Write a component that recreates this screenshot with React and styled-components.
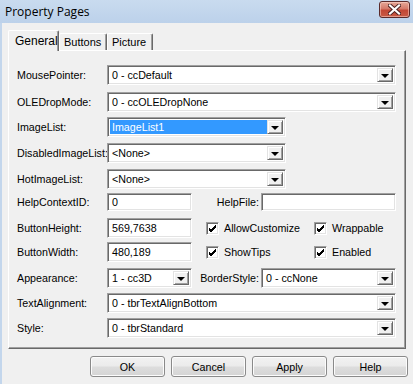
import React from "react";
import styled, { createGlobalStyle } from "styled-components";

const Global = createGlobalStyle`
  html, body { margin: 0; padding: 0; background: #f0f0f0; }
  * { box-sizing: border-box; }
`;

const Window = styled.div`
  width: 413px;
  height: 384px;
  background: #f0f0f0;
  display: flex;
  flex-direction: column;
  overflow: hidden;
  font-family: "Liberation Sans", Arial, sans-serif;
  font-size: 10.7px;
  color: #000;
`;

const TitleBar = styled.div`
  height: 23px;
  flex: none;
  display: flex;
  align-items: center;
  justify-content: space-between;
  padding: 0 3px 0 5px;
  background: linear-gradient(#c9dbef, #bcd1ea);
`;

const Title = styled.span`
  font-family: "Open Sans", "Noto Sans", sans-serif;
  font-size: 12px;
  color: #000;
  margin-top: -1px;
`;

const CloseBtn = styled.div`
  width: 31px;
  height: 17px;
  margin-top: -4px;
  border: 1px solid #5a2a2a;
  border-radius: 3px;
  background: linear-gradient(#e6a898 0%, #d57a6a 45%, #c24735 55%, #c85a45 100%);
  display: flex;
  align-items: center;
  justify-content: center;
  box-shadow: inset 0 0 0 1px rgba(255, 220, 210, 0.5);
`;

const Body = styled.div`
  flex: 1;
  display: flex;
  flex-direction: column;
  border-left: 2px solid #c3d6ec;
  padding: 7px 7px 0 6px;
`;

const TabStrip = styled.div`
  height: 20px;
  display: flex;
  align-items: flex-end;
  position: relative;
  z-index: 1;
`;

const Tab = styled.div`
  height: ${(p) => (p.$active ? 21 : 17)}px;
  width: ${(p) => p.$w}px;
  margin-bottom: ${(p) => (p.$active ? -1 : 0)}px;
  background: #f0f0f0;
  border-top: 1px solid #fff;
  border-left: 1px solid #fff;
  border-right: 1px solid #696969;
  box-shadow: inset -1px 0 0 #a0a0a0;
  border-radius: 2px 2px 0 0;
  padding: ${(p) => (p.$active ? "3px 0 0 6px" : "1px 0 0 4px")};
  line-height: 14px;
  font-size: ${(p) => (p.$active ? 12 : 11)}px;
`;

const Panel = styled.div`
  height: 299px;
  background: #f0f0f0;
  border-style: solid;
  border-width: 1px;
  border-color: #fff #696969 #696969 #fff;
  box-shadow: inset -1px -1px 0 #a0a0a0;
  padding: 14px 0 0 8px;
  display: flex;
  flex-direction: column;
`;

const Row = styled.div`
  display: flex;
  align-items: center;
  height: ${(p) => p.$h || 20}px;
  margin-top: ${(p) => p.$mt || 0}px;
`;

const Label = styled.div`
  width: ${(p) => p.$w || 90}px;
  flex: none;
  text-align: ${(p) => (p.$right ? "right" : "left")};
  padding-right: ${(p) => (p.$right ? 2 : 0)}px;
  margin-left: ${(p) => p.$ml || 0}px;
  white-space: nowrap;
`;

const Field = styled.div`
  width: ${(p) => p.$w}px;
  height: ${(p) => p.$h || 20}px;
  flex: none;
  background: #fff;
  border-style: solid;
  border-width: 1px;
  border-color: #a0a0a0 #fff #fff #a0a0a0;
  box-shadow: inset 1px 1px 0 #696969, inset -1px -1px 0 #e3e3e3;
  padding: 2px;
  display: flex;
  align-items: stretch;
`;

const FieldText = styled.div`
  flex: 1;
  display: flex;
  align-items: center;
  padding-left: 2px;
  white-space: nowrap;
  overflow: hidden;
  background: ${(p) => (p.$selected ? "#3399ff" : "transparent")};
  color: ${(p) => (p.$selected ? "#fff" : "#000")};
`;

const DropBtn = styled.div`
  width: 16px;
  flex: none;
  background: #f0f0f0;
  border-style: solid;
  border-width: 1px;
  border-color: #e3e3e3 #696969 #696969 #e3e3e3;
  box-shadow: inset 1px 1px 0 #fff, inset -1px -1px 0 #a0a0a0;
  display: flex;
  align-items: center;
  justify-content: center;
`;

const Arrow = styled.div`
  width: 0;
  height: 0;
  border-left: 4px solid transparent;
  border-right: 4px solid transparent;
  border-top: 4px solid #000;
  margin-top: 1px;
`;

const CheckGroup = styled.div`
  display: flex;
  align-items: center;
  margin-left: ${(p) => p.$ml || 0}px;
`;

const CheckItem = styled.div`
  width: ${(p) => p.$w}px;
  display: flex;
  align-items: center;
  gap: 5px;
`;

const CheckBox = styled.div`
  width: 13px;
  height: 13px;
  flex: none;
  background: #fff;
  border-style: solid;
  border-width: 1px;
  border-color: #a0a0a0 #fff #fff #a0a0a0;
  box-shadow: inset 1px 1px 0 #696969, inset -1px -1px 0 #e3e3e3;
  display: flex;
  align-items: center;
  justify-content: center;
`;

const ButtonRow = styled.div`
  display: flex;
  justify-content: flex-end;
  gap: 6px;
  margin: 7px -2px 0 0;
`;

const Button = styled.div`
  width: 75px;
  height: 21px;
  border: 1px solid #8a8a8a;
  border-radius: 3px;
  background: linear-gradient(#f2f2f2 0%, #ebebeb 48%, #dddddd 52%, #d4d4d4 100%);
  box-shadow: inset 0 0 0 1px #fcfcfc;
  display: flex;
  align-items: center;
  justify-content: center;
`;

const Combo = ({ w, text, selected }) => (
  <Field $w={w}>
    <FieldText $selected={selected}>{text}</FieldText>
    <DropBtn>
      <Arrow />
    </DropBtn>
  </Field>
);

const Text = ({ w, h, text }) => (
  <Field $w={w} $h={h}>
    <FieldText>{text}</FieldText>
  </Field>
);

const Check = ({ w, label }) => (
  <CheckItem $w={w}>
    <CheckBox>
      <svg width="9" height="9" viewBox="0 0 9 9">
        <path d="M1 4 L3 6 L8 1 M1 5 L3 7 L8 2 M1 6 L3 8 L8 3" stroke="#000" strokeWidth="1" fill="none" />
      </svg>
    </CheckBox>
    <span>{label}</span>
  </CheckItem>
);

export default function App() {
  return (
    <>
      <Global />
      <Window>
        <TitleBar>
          <Title>Property Pages</Title>
          <CloseBtn>
            <svg width="13" height="11" viewBox="0 0 13 11">
              <path d="M2 1.5 L11 9.5 M11 1.5 L2 9.5" stroke="#4a2020" strokeWidth="4" strokeLinecap="square" />
              <path d="M2 1.5 L11 9.5 M11 1.5 L2 9.5" stroke="#fff" strokeWidth="2.2" strokeLinecap="square" />
            </svg>
          </CloseBtn>
        </TitleBar>
        <Body>
          <TabStrip>
            <Tab $active $w={51}>General</Tab>
            <Tab $w={48}>Buttons</Tab>
            <Tab $w={46}>Picture</Tab>
          </TabStrip>
          <Panel>
            <Row>
              <Label>MousePointer:</Label>
              <Combo w={289} text="0 - ccDefault" />
            </Row>
            <Row $mt={7}>
              <Label>OLEDropMode:</Label>
              <Combo w={289} text="0 - ccOLEDropNone" />
            </Row>
            <Row $mt={5}>
              <Label>ImageList:</Label>
              <Combo w={179} text="ImageList1" selected />
            </Row>
            <Row $mt={6}>
              <Label>DisabledImageList:</Label>
              <Combo w={179} text="<None>" />
            </Row>
            <Row $mt={6}>
              <Label>HotImageList:</Label>
              <Combo w={179} text="<None>" />
            </Row>
            <Row $mt={4} $h={18}>
              <Label>HelpContextID:</Label>
              <Text w={85} h={18} text="0" />
              <Label $w={69} $right>HelpFile:</Label>
              <Text w={135} h={18} text="" />
            </Row>
            <Row $mt={7}>
              <Label>ButtonHeight:</Label>
              <Text w={85} text="569,7638" />
              <CheckGroup $ml={14}>
                <Check w={108} label="AllowCustomize" />
                <Check w={80} label="Wrappable" />
              </CheckGroup>
            </Row>
            <Row $mt={4}>
              <Label>ButtonWidth:</Label>
              <Text w={85} text="480,189" />
              <CheckGroup $ml={14}>
                <Check w={108} label="ShowTips" />
                <Check w={80} label="Enabled" />
              </CheckGroup>
            </Row>
            <Row $mt={6}>
              <Label>Appearance:</Label>
              <Combo w={85} text="1 - cc3D" />
              <Label $w={69} $right>BorderStyle:</Label>
              <Combo w={135} text="0 - ccNone" />
            </Row>
            <Row $mt={5}>
              <Label>TextAlignment:</Label>
              <Combo w={289} text="0 - tbrTextAlignBottom" />
            </Row>
            <Row $mt={5}>
              <Label>Style:</Label>
              <Combo w={289} text="0 - tbrStandard" />
            </Row>
          </Panel>
          <ButtonRow>
            <Button>OK</Button>
            <Button>Cancel</Button>
            <Button>Apply</Button>
            <Button>Help</Button>
          </ButtonRow>
        </Body>
      </Window>
    </>
  );
}
